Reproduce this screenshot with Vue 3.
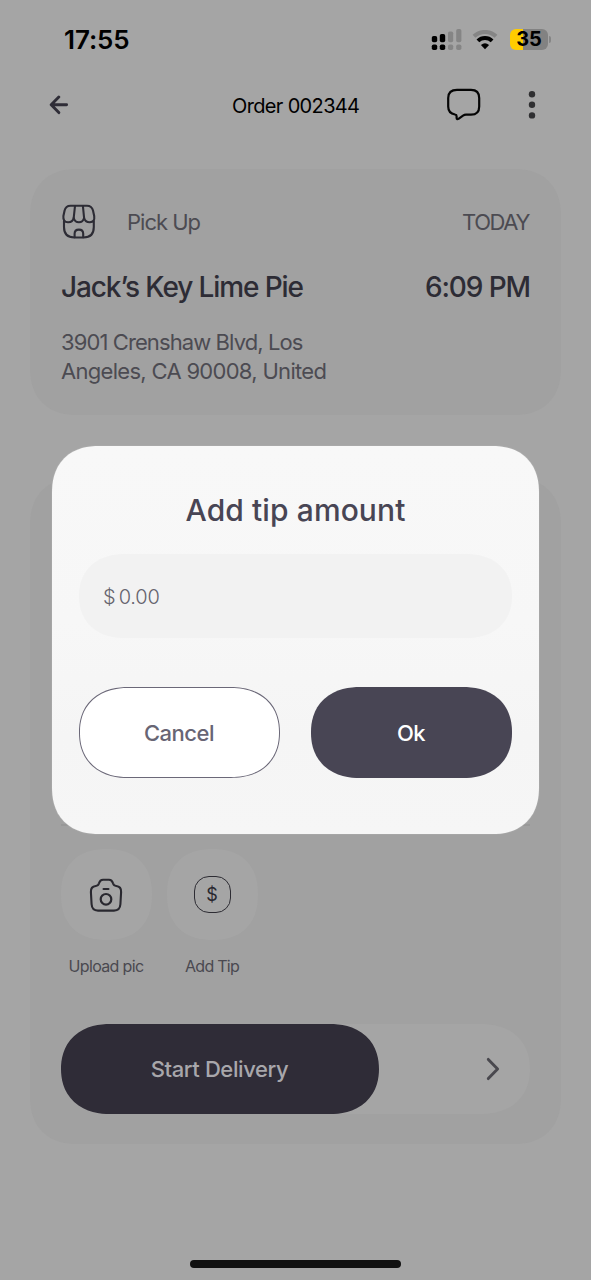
<script setup>
import { ref } from 'vue'

const amount = ref('')
const address = ['3901 Crenshaw Blvd, Los', 'Angeles, CA 90008, United']
</script>

<template>
  <div class="screen">
    <div class="status">
      <span class="clock">17:55</span>
      <div class="indicators">
        <svg class="signal" width="32" height="22" viewBox="0 0 32 22">
          <g fill="#000">
            <rect x="0.8" y="7" width="5.4" height="6.2" rx="1.8" />
            <rect x="0.8" y="15.5" width="5.4" height="5.6" rx="1.8" />
            <rect x="8.8" y="5" width="5.4" height="8.2" rx="1.8" />
            <rect x="8.8" y="15.5" width="5.4" height="5.6" rx="1.8" />
          </g>
          <g fill="#858585">
            <rect x="17" y="2.5" width="5.2" height="10.7" rx="1.8" />
            <rect x="17" y="15.5" width="5.2" height="5.6" rx="1.8" />
            <rect x="25.2" y="0" width="5.2" height="13.2" rx="1.8" />
            <rect x="25.2" y="15.5" width="5.2" height="5.6" rx="1.8" />
          </g>
        </svg>
        <svg class="wifi" width="26" height="20" viewBox="0 0 26 20">
          <path d="M2 6.3 A16 16 0 0 1 24 6.3" fill="none" stroke="#858585" stroke-width="4" />
          <path d="M5.9 10.9 A10.4 10.4 0 0 1 20.1 10.9" fill="none" stroke="#000" stroke-width="4" />
          <path d="M13 19.2 L8.9 15 Q13 11.6 17.1 15 Z" fill="#000" />
        </svg>
        <div class="battery"><span>35</span></div>
        <i class="nub"></i>
      </div>
    </div>

    <header class="nav">
      <svg class="back" width="20" height="20" viewBox="0 0 20 20">
        <path d="M9.8 2 L2.2 9.8 L9.8 17.6 M2.4 9.8 H17.6" fill="none" stroke="#2f2d37" stroke-width="2.9" stroke-linecap="round" stroke-linejoin="round" />
      </svg>
      <span class="heading">Order 002344</span>
      <svg class="chat" width="36" height="34" viewBox="0 0 36 34">
        <path d="M11 1.8 H25 Q33.2 1.8 33.2 10 V18.5 Q33.2 26.7 25 26.7 H20 Q18.4 26.7 17 27.6 L12.5 30.8 Q10.6 31.8 10.6 29.8 V28.2 Q10.6 26.7 9 26.5 Q2.2 25.3 2.2 18.5 V10 Q2.2 1.8 11 1.8 Z" fill="none" stroke="#050505" stroke-width="2.2" stroke-linejoin="round" />
      </svg>
      <svg class="more" width="8" height="30" viewBox="0 0 8 30" fill="#2f2f31">
        <circle cx="4" cy="4.2" r="3.2" /><circle cx="4" cy="14.8" r="3.2" /><circle cx="4" cy="25.4" r="3.2" />
      </svg>
    </header>

    <section class="card pickup">
      <div class="row kind">
        <svg width="36" height="36" viewBox="0 0 36 36" fill="none" stroke="#2d2c35" stroke-width="2.1" stroke-linecap="round" stroke-linejoin="round">
          <path d="M3 17 V23 Q3 33.5 13.5 33.5 H22.5 Q32.8 33.5 32.8 23 V17" />
          <path d="M9.5 1.7 H26 Q30.8 1.7 32 6.5 L33.2 12 Q34 18 29 18.2 Q24 18.3 23.1 14 Q22 18.3 17.9 18.3 Q13.8 18.3 12.7 14 Q11.8 18.3 7 18.2 Q1.8 18 2.4 12 L3.6 6.5 Q4.7 1.7 9.5 1.7 Z" />
          <path d="M14 2 L12.7 14 M21.9 2 L23.1 14" />
          <path d="M13.6 33.2 V29.7 Q13.6 25.6 17.9 25.6 Q22.2 25.6 22.2 29.7 V33.2" />
        </svg>
        <span class="label">Pick Up</span>
        <span class="today">TODAY</span>
      </div>
      <div class="row place">
        <span class="name">Jack’s Key Lime Pie</span>
        <span class="time">6:09 PM</span>
      </div>
      <div class="address">
        <div v-for="(line, i) in address" :key="line" :class="'line' + i"><span>{{ line }}</span></div>
      </div>
    </section>

    <section class="card delivery">
      <hr />
      <div class="actions">
        <div class="action">
          <div class="tile">
            <svg width="36" height="36" viewBox="0 0 36 36" fill="none" stroke="#29282f" stroke-linecap="round" stroke-linejoin="round">
              <path d="M7.8 9 Q10.2 8.8 11 6.3 Q12 2.8 15 2.8 H21 Q24 2.8 25 6.3 Q25.8 8.8 28.2 9 Q33.4 9.5 33.1 15 L32.4 27.3 Q32 33.6 26 33.6 H10 Q4 33.6 3.6 27.3 L2.9 15 Q2.6 9.5 7.8 9 Z" stroke-width="2.1" />
              <path d="M15.5 12.1 H20.5" stroke-width="2" />
              <circle cx="18" cy="22.3" r="5.3" stroke-width="2.2" />
            </svg>
          </div>
          <span class="upload">Upload pic</span>
        </div>
        <div class="action">
          <div class="tile"><div class="coin">$</div></div>
          <span class="tip">Add Tip</span>
        </div>
      </div>
      <div class="slider">
        <div class="start"><span>Start Delivery</span></div>
        <svg width="16" height="26" viewBox="0 0 16 26">
          <path d="M3.3 3.4 L12.6 13 L3.3 22.6" fill="none" stroke="#49484e" stroke-width="2.9" stroke-linecap="round" stroke-linejoin="round" />
        </svg>
      </div>
    </section>

    <div class="home"></div>

    <div class="modal">
      <h2><span>Add tip amount</span></h2>
      <label class="field"><span>$</span><input v-model="amount" placeholder="0.00" /></label>
      <div class="buttons">
        <button class="cancel">Cancel</button>
        <button class="ok">Ok</button>
      </div>
    </div>
  </div>
</template>

<style>
body { background: #a5a5a5; }
</style>

<style scoped>
* { box-sizing: border-box; }
.screen {
  position: relative;
  width: 591px;
  height: 1280px;
  overflow: hidden;
  display: flex;
  flex-direction: column;
  background: #a5a5a5;
  color: #2d2c35;
  font-family: Inter, "Liberation Sans", sans-serif;
  white-space: nowrap;
}
.status { height: 78px; padding: 0 40px 0 64px; display: flex; align-items: center; justify-content: space-between; }
.clock { font-size: 26px; font-weight: 600; color: #000; letter-spacing: -0.1px; }
.indicators { display: flex; align-items: center; height: 24px; }
.signal { margin-top: 2px; }
.wifi { margin: 1px 0 0 9px; }
.battery {
  width: 38px; height: 21px; margin-left: 12px; border-radius: 6px;
  background: linear-gradient(90deg, #ffcc00 13.5px, #828282 13.5px);
  display: flex; align-items: center; justify-content: center;
  font-size: 20px; font-weight: 700; line-height: 21px; color: #000; letter-spacing: -0.2px;
}
.nub { width: 2px; height: 7px; margin-left: 1px; border-radius: 0 3px 3px 0; background: #858585; }
.nav { height: 54px; padding: 0 55px 0 49px; display: flex; align-items: center; }
.heading { width: 127px; margin: 1px 0 0 163px; font-size: 20px; font-weight: 400; color: #000; letter-spacing: -0.65px; }
.chat { margin-left: 87px; }
.more { margin-left: auto; }

.card { width: 531px; margin-left: 30px; border-radius: 46px; background: #a1a1a1; flex: none; padding: 0 31px; }
.pickup { margin-top: 37px; height: 246px; }
.row { display: flex; align-items: center; }
.kind { height: 36px; margin-top: 35px; font-size: 22px; color: #4c4b52; }
.label { margin-left: 30px; letter-spacing: -1px; }
.today, .time { margin-left: auto; }
.today { letter-spacing: -1.4px; margin-right: 1px; }
.place { height: 40px; margin-top: 27px; font-size: 28px; font-weight: 500; }
.name { letter-spacing: -1.1px; }
.time { letter-spacing: -1.1px; }
.address { margin-top: 21px; font-size: 22px; line-height: 29px; color: #4c4b52; }
.line0 { letter-spacing: -0.9px; }
.line1 { letter-spacing: -0.7px; }

.delivery { margin-top: 63px; height: 666px; display: flex; flex-direction: column; }
hr { width: 100%; height: 2px; border: 0; margin: 346px 0 0; background: #989898; }
.actions { display: flex; gap: 15px; margin-top: 24px; height: 134px; }
.action { width: 91px; display: flex; flex-direction: column; align-items: center; font-size: 16px; color: #4a4950; }
.action > span { margin-top: 16px; line-height: 20px; }
.action > .upload { letter-spacing: -0.65px; margin-right: 1px; }
.action > .tip { letter-spacing: -0.75px; margin-right: 1px; }
.tile { width: 91px; height: 91px; margin-top: -1px; border-radius: 42px; background: #a5a5a5; display: flex; align-items: center; justify-content: center; }
.tile svg, .coin { margin-right: 1px; }
.coin { width: 37px; height: 37px; border: 1.5px solid #2d2c33; border-radius: 15px; font-size: 18px; line-height: 35px; text-align: center; color: #29282f; font-weight: 400; }
.slider { height: 90px; margin-top: 40px; border-radius: 43px; background: #a5a5a5; display: flex; align-items: center; justify-content: space-between; padding-right: 29px; }
.start { width: 318px; height: 90px; border-radius: 44px / 43px; background: #2f2c37; color: #a8a7ab; font-size: 22px; font-weight: 500; display: flex; align-items: center; justify-content: center; letter-spacing: -0.4px; padding-right: 1px; }
.home { width: 211px; height: 8px; margin: 116px 0 0 190px; border-radius: 4px; background: #111; }

.modal {
  position: absolute; left: 52px; top: 446px; width: 487px; height: 388px;
  padding: 0 27px; border-radius: 46px;
  background: linear-gradient(#f8f8f8, #f7f7f7 45%, #f5f5f5 75%, #f6f6f6);
  box-shadow: 0 0 1px #d0d0d0;
}
h2 { height: 42px; margin: 43px 0 0; font-size: 30px; line-height: 42px; font-weight: 500; text-align: center; color: #484554; letter-spacing: 0.1px; }
.field { height: 84px; margin-top: 23px; padding: 1px 24px 0; display: flex; align-items: center; border-radius: 43px / 42px; background: #f2f2f2; font-size: 20px; font-weight: 300; color: #65636d; }
.field input { width: 120px; padding: 0; margin-left: 3px; border: 0; outline: 0; background: none; font: inherit; color: inherit; letter-spacing: -0.2px; }
.field input::placeholder { color: #65636d; opacity: 1; }
.buttons { display: flex; justify-content: space-between; margin-top: 49px; }
button { width: 201px; height: 91px; padding: 0 1px 0 0; border-radius: 48px / 45px; border: 0; font: 500 22px Inter, "Liberation Sans", sans-serif; letter-spacing: -0.5px; }
.cancel { border: 1.5px solid #6b6878; background: #fff; color: #686574; }
.ok { background: #484554; color: #fff; }

@supports (corner-shape: superellipse(1.3)) {
  .card, .tile, .modal { corner-shape: superellipse(1.2); }
  .slider, .start, .field, button { corner-shape: superellipse(1.15); }
  .card, .modal { border-radius: 47px; }
  .tile { border-radius: 45px; }
  .slider, .start, .field, button { border-radius: 49px / 45px; }
}
</style>
